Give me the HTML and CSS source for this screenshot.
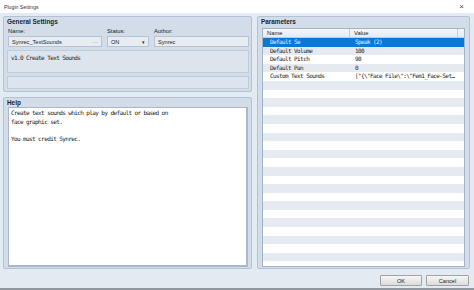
FILE: index.html
```html
<!DOCTYPE html>
<html>
<head>
<meta charset="utf-8">
<title>Plugin Settings</title>
<link rel="stylesheet" href="styles.css">
</head>
<body>
<div class="dialog">
  <div class="titlebar"><span class="title">Plugin Settings</span><span class="close">×</span></div>
  <div class="body">
    <div class="main">
      <div class="left">
        <section class="panel general">
          <div class="panel-title">General Settings</div>
          <div class="fields">
            <div class="field f-name">
              <div class="label">Name:</div>
              <div class="input"><span class="val">Synrec_TextSounds</span><span class="dots">···</span></div>
            </div>
            <div class="field f-status">
              <div class="label">Status:</div>
              <div class="input"><span class="val">ON</span><span class="arrow">▾</span></div>
            </div>
            <div class="field f-author">
              <div class="label">Author:</div>
              <div class="input"><span class="val">Synrec</span></div>
            </div>
          </div>
          <div class="desc mono">v1.0 Create Text Sounds</div>
          <div class="desc2"></div>
        </section>
        <section class="panel help">
          <div class="panel-title">Help</div>
          <div class="helptext mono">Create text sounds which play by default or based on<br>face graphic set.<br><br>You must credit Synrec.</div>
        </section>
      </div>
      <section class="panel params">
        <div class="panel-title">Parameters</div>
        <div class="table">
          <div class="thead"><div class="h1">Name</div><div class="h2">Value</div><div class="h3"></div></div>
          <div class="tbody mono">
            <div class="row sel"><div class="c1">Default Se</div><div class="c2">Speak (2)</div></div>
            <div class="row alt"><div class="c1">Default Volume</div><div class="c2">100</div></div>
            <div class="row"><div class="c1">Default Pitch</div><div class="c2">90</div></div>
            <div class="row alt"><div class="c1">Default Pan</div><div class="c2">0</div></div>
            <div class="row"><div class="c1">Custom Text Sounds</div><div class="c2">["{\"Face File\":\"Fem1_Face-Set1\",\"Sound\":\"Cursor1\"}"]</div></div>
            <div class="row alt"></div>
            <div class="row"></div>
            <div class="row alt"></div>
            <div class="row"></div>
            <div class="row alt"></div>
            <div class="row"></div>
            <div class="row alt"></div>
            <div class="row"></div>
            <div class="row alt"></div>
            <div class="row"></div>
            <div class="row alt"></div>
            <div class="row"></div>
            <div class="row alt"></div>
            <div class="row"></div>
            <div class="row alt"></div>
            <div class="row"></div>
            <div class="row alt"></div>
            <div class="row"></div>
            <div class="row alt"></div>
            <div class="row"></div>
            <div class="row alt"></div>
            <div class="row"></div>
            <div class="row alt"></div>
          </div>
        </div>
      </section>
    </div>
    <div class="footer">
      <button class="btn">OK</button>
      <button class="btn">Cancel</button>
    </div>
  </div>
</div>
</body>
</html>
```
FILE: styles.css
```css
html, body {
  margin: 0;
  padding: 0;
}
body {
  width: 474px;
  height: 290px;
  overflow: hidden;
  font-family: "Liberation Sans", Arial, sans-serif;
  font-size: 5.8px;
  color: #1e1e1e;
}
.dialog {
  width: 474px;
  height: 290px;
  box-sizing: border-box;
  background: #e3eaf2;
  border-bottom: 2px solid #8f979f;
  display: flex;
  flex-direction: column;
}
.titlebar {
  height: 13px;
  flex: none;
  background: #ffffff;
  display: flex;
  align-items: center;
  padding: 0 10px 0 4px;
}
.title {
  font-size: 5.2px;
  color: #333;
}
.close {
  margin-left: auto;
  font-size: 8px;
  color: #444;
}
.body {
  flex: 1;
  display: flex;
  flex-direction: column;
  padding: 3px 4px 0 3px;
}
.main {
  display: flex;
  gap: 5px;
  height: 253px;
  flex: none;
}
.left {
  width: 249px;
  display: flex;
  flex-direction: column;
  gap: 5px;
}
.panel {
  box-sizing: border-box;
  background: #d2dde9;
  border: 1px solid #b3c3d5;
  border-radius: 2px;
  display: flex;
  flex-direction: column;
}
.panel-title {
  height: 9px;
  line-height: 9px;
  padding-left: 3px;
  font-weight: bold;
  font-size: 6.4px;
  color: #1a2330;
  flex: none;
}
.general {
  height: 76px;
  padding: 0 2px 2px 0;
}
.fields {
  display: flex;
  gap: 5px;
  padding-left: 4px;
}
.field {
  display: flex;
  flex-direction: column;
}
.label {
  height: 10px;
  line-height: 10px;
  color: #222;
}
.input {
  box-sizing: border-box;
  height: 11px;
  background: #e6ecf2;
  border: 1px solid #b7c4d3;
  display: flex;
  align-items: center;
  padding: 0 3px 0 3px;
  color: #222;
  font-size: 5.6px;
}
.input .val {
  flex: 1;
}
.dots {
  color: #888;
  font-size: 6px;
}
.arrow {
  font-size: 5px;
  color: #222;
}
.f-name { width: 94px; }
.f-status { width: 42px; }
.f-author { width: 95px; }
.mono {
  font-family: "DejaVu Sans Mono", "Liberation Mono", monospace;
  font-size: 6px;
  letter-spacing: -0.6px;
  line-height: 8.6px;
}
.desc {
  box-sizing: border-box;
  margin: 3px 0 0 3px;
  height: 23px;
  background: #dde4ed;
  border: 1px solid #bfccda;
  padding: 3px 3px;
  color: #222;
}
.desc2 {
  box-sizing: border-box;
  margin: 3px 0 0 3px;
  height: 13px;
  background: #dde4ed;
  border: 1px solid #bfccda;
}
.help {
  height: 172px;
}
.helptext {
  box-sizing: border-box;
  margin-left: 4px;
  width: 240px;
  height: 160px;
  background: #ffffff;
  border: 1px solid #a8b8ca;
  border-width: 1px 2px 2px 1px;
  padding: 1px 2px;
  color: #222;
}
.params {
  width: 213px;
}
.table {
  box-sizing: border-box;
  margin: 2px 0 0 4px;
  width: 203px;
  height: 239px;
  border: 1px solid #a3b3c5;
  background: #ffffff;
  overflow: hidden;
}
.thead {
  display: flex;
  height: 8px;
  line-height: 8px;
  background: linear-gradient(#f5f7fa, #e6eaef);
  border-bottom: 1px solid #c3ccd6;
  color: #222;
}
.h1 {
  width: 87px;
  padding-left: 4px;
  box-sizing: border-box;
  border-right: 1px solid #c3ccd6;
}
.h2 {
  width: 108px;
  padding-left: 4px;
  box-sizing: border-box;
  border-right: 1px solid #c3ccd6;
}
.h3 {
  flex: 1;
}
.row {
  display: flex;
  height: 8.6px;
  line-height: 8.6px;
  background: #ffffff;
  color: #1e1e1e;
}
.row.alt {
  background: #e5eaf0;
}
.row.sel {
  background: #0b78d8;
  color: #e4efff;
}
.c1 {
  width: 87px;
  padding-left: 7px;
  box-sizing: border-box;
  white-space: nowrap;
  overflow: hidden;
}
.c2 {
  width: 108px;
  padding-left: 5px;
  box-sizing: border-box;
  white-space: nowrap;
  overflow: hidden;
  text-overflow: ellipsis;
}
.footer {
  display: flex;
  justify-content: flex-end;
  gap: 4px;
  padding: 6px 1px 0 0;
}
.btn {
  box-sizing: border-box;
  width: 42px;
  height: 11px;
  margin: 0;
  padding: 0;
  border: 1px solid #a3a3a3;
  border-radius: 1px;
  background: linear-gradient(#f6f6f6, #dcdcdc);
  font-family: "Liberation Sans", Arial, sans-serif;
  font-size: 5.6px;
  color: #222;
}
.btn + .btn {
  width: 43px;
}
```
